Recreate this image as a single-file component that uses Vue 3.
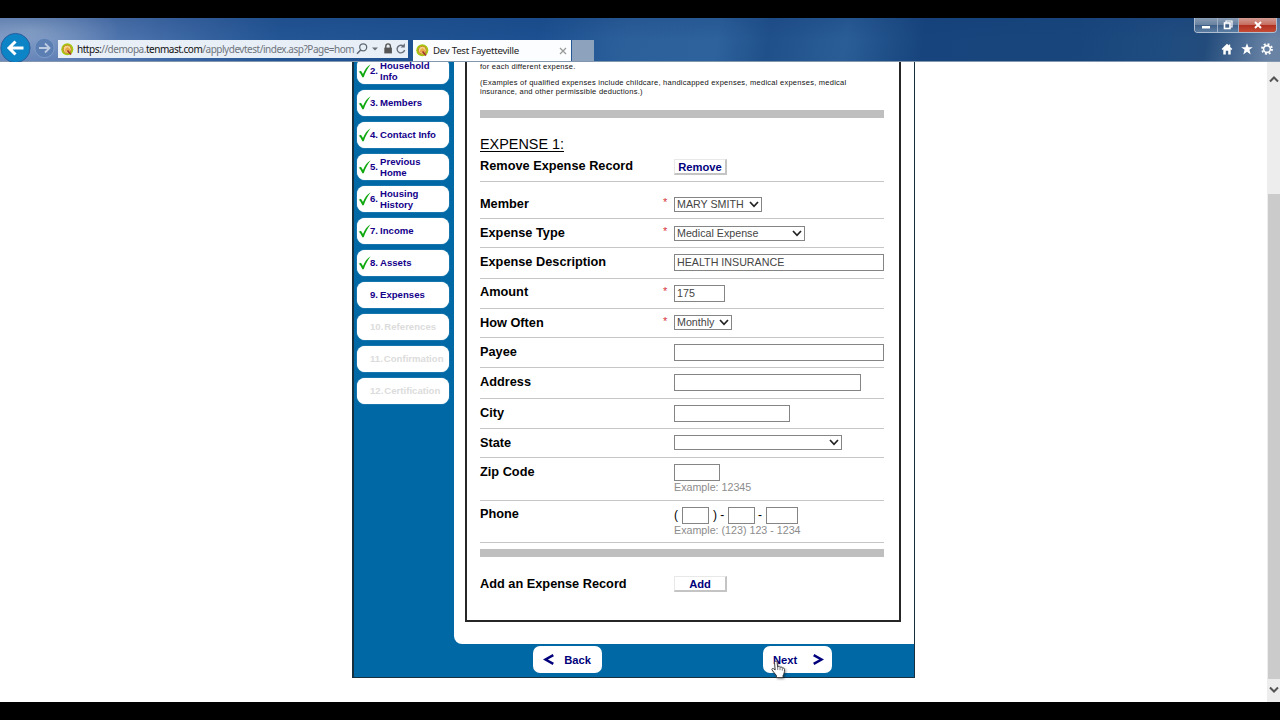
<script setup>
import { ref } from 'vue'

const steps = [
  { no: 2, label: 'Household Info', done: true },
  { no: 3, label: 'Members', done: true },
  { no: 4, label: 'Contact Info', done: true },
  { no: 5, label: 'Previous Home', done: true },
  { no: 6, label: 'Housing History', done: true },
  { no: 7, label: 'Income', done: true },
  { no: 8, label: 'Assets', done: true },
  { no: 9, label: 'Expenses', current: true },
  { no: 10, label: 'References', disabled: true },
  { no: 11, label: 'Confirmation', disabled: true },
  { no: 12, label: 'Certification', disabled: true }
]

const fields = ref([
  { key: 'member', label: 'Member', type: 'select', value: 'MARY SMITH', width: 88, height: 29, required: true },
  { key: 'type', label: 'Expense Type', type: 'select', value: 'Medical Expense', width: 131, height: 29, required: true },
  { key: 'description', label: 'Expense Description', type: 'text', value: 'HEALTH INSURANCE', width: 210, height: 31 },
  { key: 'amount', label: 'Amount', type: 'text', value: '175', width: 51, height: 30, required: true },
  { key: 'often', label: 'How Often', type: 'select', value: 'Monthly', width: 58, height: 29, required: true },
  { key: 'payee', label: 'Payee', type: 'text', value: '', width: 210, height: 30 },
  { key: 'address', label: 'Address', type: 'text', value: '', width: 187, height: 31 },
  { key: 'city', label: 'City', type: 'text', value: '', width: 116, height: 30 },
  { key: 'state', label: 'State', type: 'select', value: '', width: 168, height: 29 },
  { key: 'zip', label: 'Zip Code', type: 'text', value: '', width: 46, height: 43, hint: 'Example: 12345' },
  { key: 'phone', label: 'Phone', type: 'phone', height: 42, hint: 'Example: (123) 123 - 1234' }
])
</script>

<template>
  <div class="screen">
    <header class="chrome">
      <div class="nav-buttons">
        <svg class="nav-back" width="32" height="32" viewBox="0 0 32 32">
          <circle cx="15.5" cy="16" r="14.6" fill="#0d84c6" stroke="#2a5f9c" />
          <path d="M23.500 16H9M15.500 9.500L9 16l6.500 6.500" fill="none" stroke="#fff" stroke-width="3" />
        </svg>
        <svg class="nav-forward" width="21" height="22" viewBox="0 0 21 22">
          <circle cx="10.5" cy="11" r="9.7" fill="#5c7fb3" stroke="#7e9cc8" />
          <path d="M5 11h10M11 6.500l4.500 4.500-4.500 4.500" fill="none" stroke="#bccbe1" stroke-width="1.8" />
        </svg>
      </div>

      <div class="address-bar">
        <svg class="favicon" width="13" height="13" viewBox="0 0 13 13">
          <circle cx="6.3" cy="6.3" r="6" fill="#a5c810" />
          <circle cx="6.3" cy="6.2" r="4" fill="#f3d48c" stroke="#c78a24" />
          <path d="M4 6l2.400-2L9 6v2.500H4z" fill="#eaa94b" />
          <path d="M6.500 7.500l3.500 4" stroke="#a2322c" stroke-width="1.7" />
        </svg>
        <span class="url"><b>https:</b>//demopa.<b>tenmast.com</b>/applydevtest/index.asp?Page=hom</span>
        <svg class="bar-icons" width="50" height="14" viewBox="0 0 50 14">
          <circle cx="7.2" cy="5.3" r="3.5" fill="none" stroke="#5e6875" stroke-width="1.3" />
          <path d="M4.700 8L1 11.800" stroke="#5e6875" stroke-width="1.5" />
          <path d="M16 5.500h6l-3 3z" fill="#68717c" />
          <path d="M29.800 6V4.200a2.300 2.300 0 014.600 0V6" fill="none" stroke="#555" stroke-width="1.4" />
          <rect x="28.3" y="5.6" width="7.6" height="5.8" fill="#555" />
          <path d="M47.500 4.300A3.800 3.800 0 1048.600 8" fill="none" stroke="#68717c" stroke-width="1.4" />
          <path d="M48.900 1.200v4.200h-4.300z" fill="#68717c" />
        </svg>
      </div>

      <div class="tab">
        <svg class="favicon" width="13" height="13" viewBox="0 0 13 13">
          <circle cx="6.3" cy="6.3" r="6" fill="#a5c810" />
          <circle cx="6.3" cy="6.2" r="4" fill="#f3d48c" stroke="#c78a24" />
          <path d="M4 6l2.400-2L9 6v2.500H4z" fill="#eaa94b" />
          <path d="M6.500 7.500l3.500 4" stroke="#a2322c" stroke-width="1.7" />
        </svg>
        <span class="tab-title">Dev Test Fayetteville</span>
        <svg width="8" height="8" viewBox="0 0 8 8">
          <path d="M1 1l6 6M7 1L1 7" stroke="#999" stroke-width="1.3" />
        </svg>
      </div>
      <div class="new-tab"></div>

      <div class="chrome-right">
        <div class="window-buttons">
          <span class="win-btn">
            <svg width="10" height="10" viewBox="0 0 10 10"><path d="M1 6h8v2.500H1z" fill="#fff" /></svg>
          </span>
          <span class="win-btn restore">
            <svg width="10" height="10" viewBox="0 0 10 10">
              <path d="M3 2.500V1h6v6H7.500" fill="none" stroke="#fff" stroke-width="1.2" />
              <rect x="1.5" y="3" width="5.5" height="5.5" fill="none" stroke="#fff" stroke-width="1.6" />
            </svg>
          </span>
          <span class="win-btn close">
            <svg width="10" height="10" viewBox="0 0 10 10"><path d="M2 2l6 6M8 2L2 8" stroke="#fff" stroke-width="2" /></svg>
          </span>
        </div>
        <div class="tools">
          <svg width="12" height="12" viewBox="0 0 12 12"><path d="M6 .8L.6 6l1 .9.7-.6V11.500h2.500V7.700h2.400v3.800h2.500V6.300l.7.6 1-.9-2.200-2.100V1.500H7.900v1z" fill="#fff" /></svg>
          <svg width="12" height="12" viewBox="0 0 12 12"><path d="M6 .2l1.500 4h4.300L8.400 6.800l1.300 4.600L6 8.700l-3.700 2.700 1.300-4.600L.2 4.200h4.300z" fill="#fff" /></svg>
          <svg width="12" height="12" viewBox="0 0 12 12">
            <circle cx="6" cy="6" r="3.4" fill="none" stroke="#fff" stroke-width="1.6" />
            <circle cx="6" cy="6" r="5" fill="none" stroke="#fff" stroke-width="1.8" stroke-dasharray="1.96" />
          </svg>
        </div>
      </div>
    </header>

    <main class="viewport">
      <div class="page">
        <div class="columns">
          <nav class="steps">
            <a v-for="step in steps" :key="step.no" class="step" :class="{ disabled: step.disabled }">
              <svg class="check" width="13" height="15" viewBox="0 0 13 15">
                <path v-if="step.done" d="M.8 8.800l2.100-1L5 11C6.500 7 8.800 3.600 12.600 1.200 9.700 5 7.600 9 5.700 14.200H4.300C3.300 12 2.200 10 .8 8.800z" fill="#10a810" />
              </svg>
              <span>{{ step.no }}.</span>
              <span class="step-label" :class="{ wrap: step.label.length > 12 && step.done }">{{ step.label }}</span>
            </a>
          </nav>

          <section class="panel">
            <div class="frame">
              <p class="intro">for each different expense.</p>
              <p class="intro">(Examples of qualified expenses include childcare, handicapped expenses, medical expenses, medical<br>insurance, and other permissible deductions.)</p>
              <div class="bar"></div>

              <h2>EXPENSE 1:</h2>
              <div class="row remove-row">
                <div class="label">Remove Expense Record</div>
                <button class="small-btn">Remove</button>
              </div>

              <div v-for="f in fields" :key="f.key" class="row" :class="f.key" :style="{ height: f.height + 'px' }">
                <div class="label">{{ f.label }}</div>
                <div class="req">{{ f.required ? '*' : '' }}</div>
                <div class="control">
                  <div v-if="f.type === 'select'" class="select" :style="{ width: f.width + 'px' }">
                    <span>{{ f.value }}</span>
                    <svg width="10" height="7" viewBox="0 0 10 7"><path d="M1 1l4 4.300 4-4.300" fill="none" stroke="#222" stroke-width="1.7" /></svg>
                  </div>
                  <input v-else-if="f.type === 'text'" v-model="f.value" class="input" :style="{ width: f.width + 'px' }">
                  <div v-else class="phone-inputs">
                    <span class="paren">(</span>
                    <input class="input area">
                    <span class="dash">) -</span>
                    <input class="input prefix">
                    <span class="dash second">-</span>
                    <input class="input line">
                  </div>
                  <div v-if="f.hint" class="hint">{{ f.hint }}</div>
                </div>
              </div>

              <div class="bar end"></div>
              <div class="row add-row">
                <div class="label">Add an Expense Record</div>
                <button class="small-btn">Add</button>
              </div>
            </div>
          </section>
        </div>

        <footer class="pager">
          <button class="page-btn">
            <svg width="11" height="11" viewBox="0 0 11 11"><path d="M10.300 1.200L2.500 5.500l7.800 4.300" fill="none" stroke="#00007c" stroke-width="2.5" /></svg>
            <span>Back</span>
          </button>
          <button class="page-btn next">
            <span>Next</span>
            <svg width="11" height="11" viewBox="0 0 11 11"><path d="M.7 1.200l7.800 4.300L.7 9.800" fill="none" stroke="#00007c" stroke-width="2.5" /></svg>
          </button>
        </footer>
      </div>

      <div class="scrollbar">
        <svg width="10" height="7" viewBox="0 0 10 7"><path d="M1 5.500l4-4 4 4" fill="none" stroke="#555" stroke-width="2" /></svg>
        <div class="thumb"></div>
        <svg width="10" height="7" viewBox="0 0 10 7"><path d="M1 1.500l4 4 4-4" fill="none" stroke="#555" stroke-width="2" /></svg>
      </div>
    </main>

    <!-- hand pointer over the Next button -->
    <svg class="cursor" width="15" height="19" viewBox="0 0 15 19">
      <path d="M4 1.500c1-.8 2 0 2.100 1l.5 4.500c1-.9 2-.5 2.400.3 1-.6 2-.2 2.300.7 1.300-.4 2.200.4 2.200 1.600 0 3-.5 4-1.500 6v2H5.500v-2C4 13.800 2.500 12 1 9.800c-.5-1.200.8-1.800 1.700-1L4.200 10 3.500 2.500z" fill="#fff" stroke="#333" stroke-width=".9" />
      <path d="M6.700 7v3M9 7.600v2.600M11.300 8.300v2.300" stroke="#555" stroke-width=".8" />
    </svg>
  </div>
</template>

<style>
body {
  margin: 0;
  background: #000;
}
</style>

<style scoped>
.screen {
  width: 1280px;
  height: 720px;
  box-sizing: border-box;
  padding: 18px 0;
  background: #000;
  overflow: hidden;
  display: flex;
  flex-direction: column;
  position: relative;
  font-family: "Liberation Sans", Arial, sans-serif;
}

/* Browser chrome */
.chrome {
  height: 44px;
  flex: none;
  box-sizing: border-box;
  display: flex;
  align-items: flex-start;
  border-bottom: 1px solid #8296ae;
  background:
    linear-gradient(180deg, rgba(20, 60, 120, 0.25), rgba(20, 60, 120, 0) 50%),
    radial-gradient(ellipse 90px 30px at 30px 12px, rgba(180, 200, 220, 0.45), rgba(180, 200, 220, 0)),
    linear-gradient(100deg, #6f8bbd 0%, #5e7fb5 6%, #3d68a4 14%, #235594 22%, #1c5090 42%, #2c609b 49%, #2d629c 56%, #20508a 60%, #2a5d96 66%, #17447c 72%, #18467c 84%, #1f4c80 91%, #234c7c 94%, #6983a5 99%);
}

.nav-buttons {
  width: 58px;
  display: flex;
  align-items: center;
  padding-top: 14px;
}

.nav-forward {
  margin-left: 2px;
}

.address-bar {
  width: 350px;
  height: 18px;
  margin-top: 22px;
  display: flex;
  align-items: center;
  background: #e9eff7;
  color: #6e757d;
}

.favicon {
  flex: none;
  margin-left: 3px;
}

.url {
  width: 277px;
  flex: none;
  margin-left: 3px;
  white-space: nowrap;
  font: 10px/18px "Noto Sans", sans-serif;
  letter-spacing: -0.48px;
}

.url b {
  color: #111;
  font-weight: 400;
}

.bar-icons {
  flex: none;
  margin-left: 2px;
}

.tab {
  width: 158px;
  height: 21px;
  margin: 22px 1px 0 5px;
  display: flex;
  align-items: center;
  background: #fcfdfe;
}

.tab-title {
  width: 126px;
  margin: 0 0 0 4px;
  font: 9.7px/21px "Noto Sans", sans-serif;
  letter-spacing: -0.27px;
  color: #222;
}

.new-tab {
  width: 22px;
  height: 21px;
  margin-top: 22px;
  background: #8da2bc;
}

.chrome-right {
  margin-left: auto;
  display: flex;
  flex-direction: column;
  align-items: flex-end;
}

.window-buttons {
  display: flex;
  height: 14px;
  margin-right: 3px;
  border: 1px solid #b0bfd0;
  border-top: 0;
  border-radius: 0 0 4px 4px;
  overflow: hidden;
}

.win-btn {
  width: 22px;
  display: flex;
  align-items: center;
  justify-content: center;
  background: linear-gradient(#8b9eb6, #66809f 50%, #3f5f88 51%, #5c7da3);
}

.win-btn.restore {
  width: 20px;
  border: solid #a1b1c5;
  border-width: 0 1px;
}

.win-btn.close {
  width: 37px;
  background: linear-gradient(#d39c93, #c66c5e 50%, #b02f20 51%, #c54c36);
}

.tools {
  display: flex;
  gap: 8px;
  margin: 10px 7px 0 0;
}

/* Page */
.viewport {
  height: 640px;
  display: flex;
  background: #fff;
  overflow: hidden;
}

.page {
  width: 560px;
  height: 615px;
  margin-left: 352px;
  border: solid #17303f;
  border-width: 0 1px 1px 2px;
  background: #0068a4;
}

.columns {
  display: flex;
  height: 582px;
}

.steps {
  width: 100px;
  box-sizing: border-box;
  padding-left: 3px;
  margin-top: -4px;
  display: flex;
  flex-direction: column;
  gap: 6px;
}

.step {
  width: 92px;
  height: 26px;
  flex: none;
  box-sizing: border-box;
  padding-bottom: 1px;
  display: flex;
  align-items: center;
  background: #fff;
  border-radius: 8px;
  box-shadow: 0 0 1px #fff;
  color: #14008a;
  font-size: 9.6px;
  font-weight: 700;
  line-height: 11px;
  white-space: nowrap;
}

.step.disabled {
  color: #dcdcdc;
}

.check {
  flex: none;
  margin-left: 1px;
}

.step > span:first-of-type {
  margin-left: -1px;
}

.step-label {
  margin-left: 2px;
}

.step.disabled .step-label {
  margin-left: 1px;
}

.step-label.wrap {
  width: 56px;
  white-space: normal;
}

.panel {
  flex: 1;
  background: #fff;
  border-radius: 0 0 0 8px;
}

.frame {
  width: 404px;
  height: 558px;
  margin-left: 11px;
  padding: 0 15px 0 13px;
  border: solid #262626;
  border-width: 0 2px 2px;
}

.intro {
  margin: 0 0 7px;
  font-size: 7.5px;
  line-height: 9px;
  letter-spacing: 0.255px;
  white-space: nowrap;
  color: #111;
}

.bar {
  height: 8px;
  margin-top: 14px;
  background: #bfbfbf;
}

h2 {
  margin: 18px 0 0;
  font-size: 14.4px;
  font-weight: 400;
  line-height: 17px;
  text-decoration: underline;
  text-decoration-thickness: 1px;
  text-underline-offset: 2px;
}

.row {
  display: flex;
  align-items: flex-start;
  box-sizing: border-box;
  border-bottom: 1px solid #c6c6c6;
}

.label {
  width: 183px;
  margin-top: 6px;
  font-size: 12.75px;
  font-weight: 700;
  line-height: 16px;
}

.remove-row .label,
.amount .label,
.phone .label {
  margin-top: 5px;
}

.remove-row {
  height: 29px;
  margin-bottom: 8px;
}

.remove-row .small-btn,
.add-row .small-btn {
  margin-left: 11px;
}

.small-btn {
  width: 53px;
  height: 16px;
  margin-top: 6px;
  padding: 0;
  border: solid #e8e8e8;
  border-width: 1px 2px 2px 1px;
  border-right-color: #c4c4c4;
  border-bottom-color: #c4c4c4;
  background: #fff;
  color: #00007c;
  font: 700 11.2px/12px "Liberation Sans", Arial, sans-serif;
}

.req {
  width: 11px;
  margin-top: 6px;
  font-size: 11px;
  line-height: 12px;
  color: #d8343c;
}

.control {
  margin-top: 6px;
}

.member .control,
.type .control {
  margin-top: 7px;
}

.select,
.input {
  box-sizing: border-box;
  border: 1px solid #858585;
  background: #fff;
  color: #444;
  font: 10.7px/13px "Liberation Sans", Arial, sans-serif;
}

.select {
  height: 15px;
  padding: 0 2px;
  display: flex;
  align-items: center;
  justify-content: space-between;
}

.input {
  display: block;
  height: 17px;
  padding: 0 2px;
  border-radius: 0;
}

.description .input,
.amount .input {
  padding: 0 2px 1px;
}

.phone-inputs {
  display: flex;
  align-items: center;
  font-size: 12px;
  line-height: 17px;
}

.paren {
  width: 8px;
}

.area,
.prefix {
  width: 27px;
}

.dash {
  width: 15px;
  padding-left: 4px;
  white-space: nowrap;
}

.dash.second {
  width: 8px;
  padding-left: 3px;
}

.line {
  width: 32px;
}

.hint {
  font-size: 10.7px;
  line-height: 13px;
  color: #8c8c8c;
}

.bar.end {
  margin-top: 6px;
}

.add-row {
  margin-top: 13px;
  border: 0;
}

/* Bottom navigation */
.pager {
  height: 33px;
  display: flex;
  align-items: flex-start;
  padding: 2px 0 0 179px;
}

.page-btn {
  width: 69px;
  height: 27px;
  padding: 0 11px 0 10px;
  display: flex;
  align-items: center;
  justify-content: space-between;
  border: 0;
  border-radius: 7px;
  background: #fff;
  color: #00007c;
  font: 700 11.2px/14px "Liberation Sans", Arial, sans-serif;
}

.page-btn.next {
  margin-left: 161px;
  padding: 0 8px 0 10px;
}

.scrollbar {
  width: 13px;
  margin-left: auto;
  box-sizing: border-box;
  padding: 14px 0 9px;
  display: flex;
  flex-direction: column;
  align-items: center;
  background: #ededed;
}

.thumb {
  width: 12px;
  height: 485px;
  margin: auto 0 7px;
  background: #cbcbcb;
}

.cursor {
  position: absolute;
  left: 771px;
  top: 660px;
  filter: drop-shadow(1px 1px 1px rgba(0, 0, 0, 0.4));
}
</style>
